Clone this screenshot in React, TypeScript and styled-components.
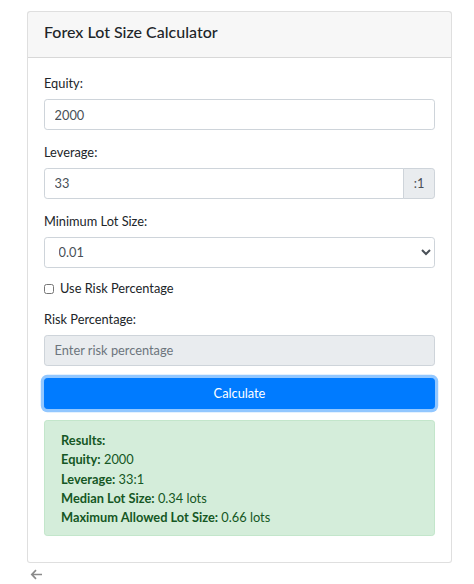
import React, { useState } from 'react';
import styled, { createGlobalStyle } from 'styled-components';

const GlobalStyle = createGlobalStyle`
  html, body {
    margin: 0;
    padding: 0;
    background: #fff;
  }
  body {
    font-family: Lato, "Noto Sans", "Liberation Sans", sans-serif;
    font-size: 12.8px;
    line-height: 1.5;
    color: #212529;
  }
  * {
    box-sizing: border-box;
  }
`;

const Page = styled.div`
  padding: 11px 22px 0 27px;
`;

const Card = styled.div`
  border: 1px solid rgba(0, 0, 0, 0.125);
  border-radius: 3.2px;
  background: #fff;
`;

const CardHeader = styled.div`
  background: rgba(0, 0, 0, 0.03);
  border-bottom: 1px solid rgba(0, 0, 0, 0.125);
  padding: 9.6px 16px;
`;

const Title = styled.h5`
  margin: 0 0 6.4px;
  font-size: 16px;
  font-weight: 500;
  line-height: 1.2;
`;

const CardBody = styled.div`
  padding: 16px;
`;

const FormGroup = styled.div`
  margin-bottom: 12.8px;
`;

const Label = styled.label`
  display: inline-block;
  margin-bottom: 6.4px;
`;

const Input = styled.input`
  display: block;
  width: 100%;
  height: 30.4px;
  padding: 4.8px 9.6px;
  font: inherit;
  color: #495057;
  background: ${(p) => (p.disabled ? '#e9ecef' : '#fff')};
  border: 1px solid #ced4da;
  border-radius: 3.2px;
  outline: none;
  &::placeholder {
    color: #6c757d;
  }
`;

const InputGroup = styled.div`
  display: flex;
  align-items: stretch;
  ${Input} {
    flex: 1 1 auto;
    width: 1%;
    border-top-right-radius: 0;
    border-bottom-right-radius: 0;
  }
`;

const Append = styled.span`
  display: flex;
  align-items: center;
  padding: 4.8px 9.6px;
  margin-left: -1px;
  color: #495057;
  background: #e9ecef;
  border: 1px solid #ced4da;
  border-radius: 0 3.2px 3.2px 0;
`;

const Select = styled.select`
  display: block;
  width: 100%;
  height: 30.4px;
  padding: 4.8px 9.6px;
  font: inherit;
  color: #495057;
  background: #fff;
  border: 1px solid #ced4da;
  border-radius: 3.2px;
  outline: none;
`;

const Check = styled.div`
  display: flex;
  align-items: center;
  margin: -1px 0 11px;
`;

const CheckBox = styled.input`
  width: 10px;
  height: 10px;
  margin: 0 6px 0 0;
`;

const Button = styled.button`
  display: block;
  width: 100%;
  padding: 4.8px 9.6px;
  font: inherit;
  line-height: 1.5;
  color: #fff;
  background: #007bff;
  border: 1px solid #007bff;
  border-radius: 3.2px;
  box-shadow: 0 0 0 3.2px rgba(38, 143, 255, 0.5);
  cursor: pointer;
`;

const Alert = styled.div`
  margin: 11px 0 10px;
  padding: 10px 16px 8px;
  color: #155724;
  background: #d4edda;
  border: 1px solid #c3e6cb;
  border-radius: 3.2px;
`;

const Line = styled.div`
  color: #155724;
`;

const Key = styled.strong`
  font-weight: 700;
`;

const Back = styled.div`
  padding: 6px 0 0 3px;
  color: #8a8a8a;
  line-height: 1;
`;

const results = [
  { key: 'Equity:', value: '2000' },
  { key: 'Leverage:', value: '33:1' },
  { key: 'Median Lot Size:', value: '0.34 lots' },
  { key: 'Maximum Allowed Lot Size:', value: '0.66 lots' },
];

export default function App() {
  const [useRisk, setUseRisk] = useState(false);
  return (
    <Page>
      <GlobalStyle />
      <Card>
        <CardHeader>
          <Title>Forex Lot Size Calculator</Title>
        </CardHeader>
        <CardBody>
          <FormGroup>
            <Label>Equity:</Label>
            <Input defaultValue="2000" />
          </FormGroup>
          <FormGroup>
            <Label>Leverage:</Label>
            <InputGroup>
              <Input defaultValue="33" />
              <Append>:1</Append>
            </InputGroup>
          </FormGroup>
          <FormGroup>
            <Label>Minimum Lot Size:</Label>
            <Select defaultValue="0.01">
              <option>0.01</option>
              <option>0.1</option>
              <option>1</option>
            </Select>
          </FormGroup>
          <Check>
            <CheckBox type="checkbox" checked={useRisk} onChange={() => setUseRisk(!useRisk)} />
            <span>Use Risk Percentage</span>
          </Check>
          <FormGroup>
            <Label>Risk Percentage:</Label>
            <Input placeholder="Enter risk percentage" disabled={!useRisk} />
          </FormGroup>
          <Button>Calculate</Button>
          <Alert>
            <Line>
              <Key>Results:</Key>
            </Line>
            {results.map((r) => (
              <Line key={r.key}>
                <Key>{r.key}</Key> {r.value}
              </Line>
            ))}
          </Alert>
        </CardBody>
      </Card>
      <Back>
        <svg width="13" height="11" viewBox="0 0 13 11" fill="none" stroke="currentColor" strokeWidth="1.7">
          <path d="M12 5.5H1.8M6 1.2L1.8 5.5 6 9.8" />
        </svg>
      </Back>
    </Page>
  );
}
